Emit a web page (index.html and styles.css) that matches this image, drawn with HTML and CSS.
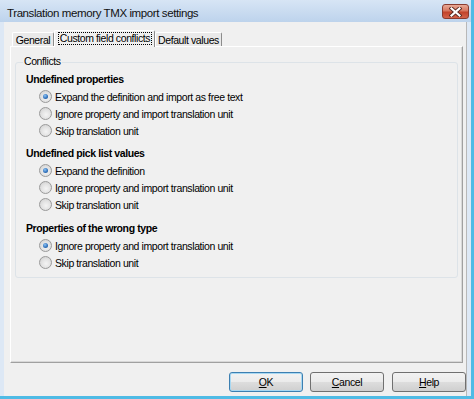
FILE: index.html
```html
<!DOCTYPE html>
<html>
<head>
<meta charset="utf-8">
<link rel="stylesheet" href="styles.css">
</head>
<body>
<div class="window">
  <div class="titlebar">
    <span class="title">Translation memory TMX import settings</span>
    <div class="close">
      <svg width="13" height="10" viewBox="0 0 13 10">
        <path d="M2.5 1.5 L10.5 8.5 M10.5 1.5 L2.5 8.5" stroke="#5a2a22" stroke-width="4" stroke-linecap="square" fill="none"/>
        <path d="M2.5 1.5 L10.5 8.5 M10.5 1.5 L2.5 8.5" stroke="#ffffff" stroke-width="2.2" stroke-linecap="square" fill="none"/>
      </svg>
    </div>
  </div>
  <div class="client">
    <div class="tabs">
      <div class="tab tab-general">General</div>
      <div class="tab active"><span class="focus">Custom field conflicts</span></div>
      <div class="tab tab-default">Default values</div>
    </div>
    <div class="panel">
      <div class="group">
        <div class="group-label">Conflicts</div>
        <div class="heading h1">Undefined properties</div>
        <div class="radio checked"><span class="dot"></span>Expand the definition and import as free text</div>
        <div class="radio"><span class="dot"></span>Ignore property and import translation unit</div>
        <div class="radio"><span class="dot"></span>Skip translation unit</div>
        <div class="heading h2">Undefined pick list values</div>
        <div class="radio checked"><span class="dot"></span>Expand the definition</div>
        <div class="radio"><span class="dot"></span>Ignore property and import translation unit</div>
        <div class="radio"><span class="dot"></span>Skip translation unit</div>
        <div class="heading h3">Properties of the wrong type</div>
        <div class="radio checked"><span class="dot"></span>Ignore property and import translation unit</div>
        <div class="radio"><span class="dot"></span>Skip translation unit</div>
      </div>
    </div>
    <div class="buttons">
      <div class="btn default"><u>O</u>K</div>
      <div class="btn cancel"><u>C</u>ancel</div>
      <div class="btn help"><u>H</u>elp</div>
    </div>
  </div>
</div>
</body>
</html>
```
FILE: styles.css
```css
* { box-sizing: border-box; }
html, body { margin: 0; padding: 0; }
body {
  width: 474px;
  height: 399px;
  overflow: hidden;
  font-family: "Liberation Sans", Arial, sans-serif;
  font-size: 10.5px;
  letter-spacing: -0.4px;
  color: #000;
  background: #f0f0f0;
}
.window {
  width: 474px;
  height: 399px;
  display: flex;
  flex-direction: column;
  background: #dde8f5;
  border-right: 3px solid #4fbbe5;
  border-bottom: 3px solid #4fbbe5;
}
.titlebar {
  height: 22px;
  flex: none;
  display: flex;
  align-items: flex-start;
  justify-content: space-between;
  padding: 0 2px 0 7px;
  background: linear-gradient(#d7e5f5, #bdd3ec);
}
.title {
  font-size: 11.5px;
  line-height: 14px;
  padding-top: 6px;
  color: #111;
}
.close {
  margin-top: 4px;
  width: 27px;
  height: 15px;
  border: 1px solid #8a3b2f;
  border-radius: 3px;
  background: linear-gradient(#e8a996 0%, #d7765f 45%, #c2432b 55%, #d4624a 100%);
  display: flex;
  align-items: center;
  justify-content: center;
}
.client {
  flex: 1;
  margin: 0 4px;
  background: #f0f0f0;
  border-right: 1px solid #b8b8b8;
  padding: 8px 3px 0 6px;
  display: flex;
  flex-direction: column;
}
.tabs {
  display: flex;
  align-items: flex-end;
  height: 16px;
  padding-left: 2px;
  position: relative;
  z-index: 1;
}
.tab {
  height: 14px;
  line-height: 13px;
  padding-top: 1px;
  text-align: center;
  background: #e9e9e9;
  border: 1px solid;
  border-color: #ffffff #8c8c8c transparent #ffffff;
  border-bottom: none;
  border-radius: 2px 2px 0 0;
}
.tab-general { width: 42px; }
.tab-default { width: 67px; }
.tab.active {
  width: 101px;
  height: 17px;
  margin-bottom: -1px;
  padding: 1px 2px 0 3px;
  background: #f0f0f0;
}
.focus {
  display: block;
  border: 1px dotted #000;
  line-height: 11px;
  height: 13px;
}
.panel {
  height: 317px;
  border: 1px solid;
  border-color: #ffffff #a0a0a0 #a0a0a0 #ffffff;
  box-shadow: inset -1px -1px 0 #d8d8d8;
  padding: 15px 4px 0;
}
.group {
  border: 1px solid #dde3e8;
  border-radius: 3px;
  padding: 0 0 6px 10px;
}
.group-label {
  width: fit-content;
  margin: -8px 0 0 -3px;
  padding: 0 1px;
  line-height: 13px;
  height: 13px;
  background: #f0f0f0;
}
.heading {
  font-weight: bold;
  line-height: 18px;
  height: 18px;
}
.h1 { margin-top: 2px; }
.h2 { margin-top: 5px; }
.h3 { margin-top: 6px; }
.radio {
  display: flex;
  align-items: center;
  height: 17px;
  padding-left: 13px;
}
.dot {
  position: relative;
  width: 13px;
  height: 13px;
  margin-right: 3px;
  border-radius: 50%;
  border: 1px solid #9a9a9a;
  background: radial-gradient(circle at 55% 60%, #f4f4f4 0%, #e2e2e2 50%, #c9c9c9 100%);
  flex: none;
}
.checked .dot::after {
  content: "";
  position: absolute;
  left: 3px;
  top: 3px;
  width: 5px;
  height: 5px;
  border-radius: 50%;
  background: radial-gradient(circle at 40% 35%, #8cc3f5 0%, #2f6fb9 60%, #1a4f8c 100%);
}
.buttons {
  display: flex;
  justify-content: flex-end;
  margin-top: 9px;
  margin-right: -3px;
}
.btn {
  width: 74px;
  height: 20px;
  line-height: 18px;
  text-align: center;
  border: 1px solid #707070;
  border-radius: 3px;
  background: linear-gradient(#f2f2f2 0%, #ebebeb 49%, #dddddd 51%, #cfcfcf 100%);
}
.btn.default {
  border-color: #3c7fb1;
  box-shadow: inset 0 0 0 1px #a8d8f2;
}
.btn.cancel { margin-left: 7px; }
.btn.help { margin-left: 8px; }
```
